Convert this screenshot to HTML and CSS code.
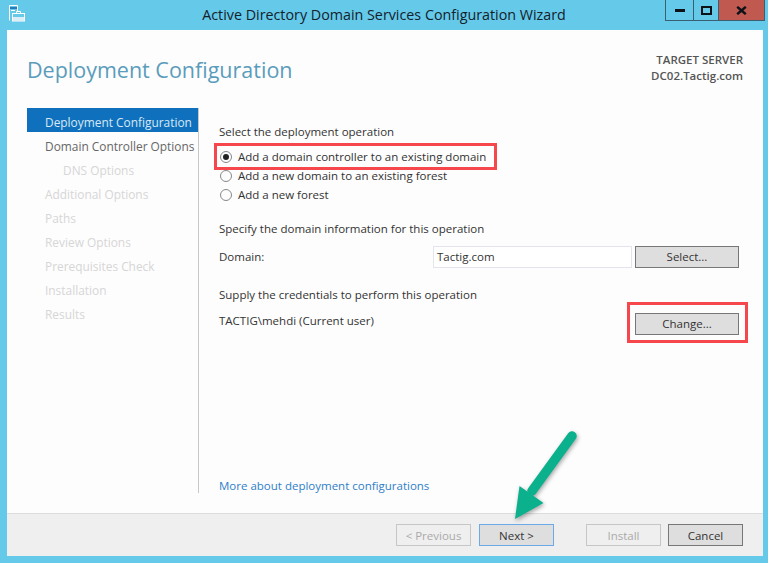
FILE: index.html
```html
<!DOCTYPE html>
<html lang="en">
<head>
<meta charset="utf-8">
<title>Active Directory Domain Services Configuration Wizard</title>
<link rel="stylesheet" href="styles.css">
</head>
<body>
<div class="window">
  <header class="titlebar">
    <svg class="app-icon" width="17" height="17" viewBox="0 0 17 17" fill="none" stroke="#fff" stroke-width="1">
      <path d="M.5 15.500V.5h8v5.500"/>
      <path d="M1 3h7" stroke="#2a79b8" stroke-width="2"/>
      <path d="M2 5.500h4"/>
      <rect x="3.500" y="8.500" width="12" height="7.500" fill="#65c9ea"/>
      <path d="M7.500 8.500V6.500h4v2"/>
      <rect x="4" y="12" width="11" height="4" fill="#dceff7" stroke="none"/>
    </svg>
    <div class="title">Active Directory Domain Services Configuration Wizard</div>
    <div class="controls">
      <div class="ctl ctl-min"><svg width="10" height="4" viewBox="0 0 10 4"><rect width="10" height="3" y="1" fill="#0c1217"/></svg></div>
      <div class="ctl ctl-max"><svg width="11" height="9" viewBox="0 0 11 9" fill="none"><rect x="1" y="1" width="9" height="7" stroke="#0c1217" stroke-width="2"/></svg></div>
      <div class="ctl ctl-close"><svg width="11" height="9" viewBox="0 0 11 9" fill="none"><path d="M1.200.8 9.800 8.200M9.800.8 1.200 8.200" stroke="#0c1217" stroke-width="2.400"/></svg></div>
    </div>
  </header>

  <div class="panel">
    <div class="head">
      <h1 class="heading">Deployment Configuration</h1>
      <div class="target">
        <div>TARGET SERVER</div>
        <div>DC02.Tactig.com</div>
      </div>
    </div>

    <div class="content">
      <nav class="steps">
        <div class="step step-active">Deployment Configuration</div>
        <div class="step step-on">Domain Controller Options</div>
        <div class="step step-off step-sub">DNS Options</div>
        <div class="step step-off">Additional Options</div>
        <div class="step step-off">Paths</div>
        <div class="step step-off">Review Options</div>
        <div class="step step-off">Prerequisites Check</div>
        <div class="step step-off">Installation</div>
        <div class="step step-off">Results</div>
      </nav>

      <main class="form">
        <div class="label label-first">Select the deployment operation</div>
        <div class="radios">
          <div class="radio-row"><span class="radio radio-on"></span>Add a domain controller to an existing domain</div>
          <div class="radio-row"><span class="radio"></span>Add a new domain to an existing forest</div>
          <div class="radio-row"><span class="radio"></span>Add a new forest</div>
        </div>
        <div class="label label-specify">Specify the domain information for this operation</div>
        <div class="domain-row">
          <div class="domain-label">Domain:</div>
          <div class="input">Tactig.com</div>
          <div class="btn btn-form">Select...</div>
        </div>
        <div class="label label-supply">Supply the credentials to perform this operation</div>
        <div class="cred-row">
          <div class="cred-user">TACTIG\mehdi (Current user)</div>
          <div class="btn btn-form">Change...</div>
        </div>
        <a class="more" href="#">More about deployment configurations</a>
      </main>
    </div>

    <footer class="footer">
      <div class="btn btn-foot btn-disabled">&lt; Previous</div>
      <div class="btn btn-foot btn-next">Next &gt;</div>
      <div class="btn btn-foot btn-disabled btn-install">Install</div>
      <div class="btn btn-foot">Cancel</div>
    </footer>
  </div>
</div>

<div class="mark mark-radio"></div>
<div class="mark mark-change"></div>
<svg class="arrow" width="80" height="100" viewBox="0 0 80 100">
  <path d="M64 10 24 65" stroke="#0bb08c" stroke-width="9.500" stroke-linecap="round" fill="none"/>
  <path d="M7 93 11.500 60 35.500 77Z" fill="#0bb08c"/>
</svg>
</body>
</html>
```
FILE: styles.css
```css
* { box-sizing: border-box; }
html, body { margin: 0; padding: 0; }
body {
  width: 768px;
  height: 563px;
  overflow: hidden;
  position: relative;
  background: #65c9ea;
  font-family: "Open Sans", "Noto Sans", sans-serif;
  font-size: 11.500px;
  color: #333;
}
.window { display: flex; flex-direction: column; height: 100%; }

.titlebar { height: 30px; position: relative; display: flex; justify-content: center; flex: none; }
.app-icon { position: absolute; left: 9px; top: 5px; }
.title { font-size: 14.300px; line-height: 30px; color: #14222b; }
.controls { position: absolute; right: 3px; top: 0; display: flex; height: 21px; border: 1px solid #3a5f72; border-top: 0; }
.ctl { display: flex; align-items: center; justify-content: center; }
.ctl-min { width: 28px; border-right: 1px solid #3a5f72; }
.ctl-max { width: 25px; border-right: 1px solid #3a5f72; }
.ctl-close { width: 45px; background: #c05a50; }

.panel { flex: 1; margin: 0 5px 7px 7px; background: #fdfdfd; display: flex; flex-direction: column; min-height: 0; }

.head { height: 78px; flex: none; display: flex; justify-content: space-between; padding: 0 20px; }
.heading { margin: 22px 0 0; font-size: 21.500px; font-weight: 400; line-height: 36px; color: #5a9cbb; }
.target { margin-top: 22px; text-align: right; font-weight: 600; line-height: 16px; color: #555; }

.content { flex: 1; display: flex; min-height: 0; padding-bottom: 20px; }

.steps { width: 172px; margin-left: 20px; flex: none; border-right: 1px solid #c8c8c8; }
.step { height: 24px; line-height: 29px; padding-left: 18px; font-size: 11.900px; white-space: nowrap; }
.step-active { background: #0f71bd; color: #d8e8f4; }
.step-on { color: #666; }
.step-off { color: #d6d6d6; }
.step-sub { padding-left: 36px; }

.form { flex: 1; display: flex; flex-direction: column; padding: 0 24px 0 20px; min-width: 0; color: #333; }
.label { line-height: 16px; }
.label-first { margin-top: 16px; }
.radios { margin-top: 7px; }
.radio-row { height: 19px; display: flex; align-items: center; gap: 6px; white-space: nowrap; }
.radio { width: 12px; height: 12px; border-radius: 50%; border: 1px solid #888; background: #fdfdfd; margin-left: 1px; display: flex; align-items: center; justify-content: center; flex: none; }
.radio-on::after { content: ""; width: 6px; height: 6px; border-radius: 50%; background: #222; }
.label-specify { margin-top: 17px; }
.domain-row { display: flex; align-items: center; height: 23px; margin-top: 8px; }
.domain-label { width: 214px; flex: none; }
.input { width: 199px; height: 22px; line-height: 20px; padding-left: 3px; border: 1px solid #e4e4ee; background: #fff; }
.btn { height: 22px; display: flex; align-items: center; justify-content: center; border: 1px solid #777; background: #dedede; color: #333; }
.btn-form { width: 104px; margin-left: 3px; }
.label-supply { margin-top: 19px; }
.cred-row { display: flex; align-items: center; justify-content: space-between; margin-top: 9px; height: 23px; }
.cred-user { margin-bottom: 6px; }
.more { margin-top: auto; margin-bottom: -1px; line-height: 16px; color: #2f7fc8; text-decoration: none; }

.footer { height: 43px; flex: none; display: flex; align-items: center; background: #efefef; border-top: 1px solid #dcdcdc; padding: 0 20px 0 389px; }
.btn-foot { width: 75px; }
.btn-next { margin-left: 8px; border-color: #6ca9e8; }
.btn-disabled { background: #efefef; border-color: #c6c6c6; color: #aaa; }
.btn-install { margin: 0 7px 0 32px; }

.mark { position: absolute; border: 3px solid #f5474c; }
.mark-radio { left: 214px; top: 143px; width: 283px; height: 27px; }
.mark-change { left: 627px; top: 302px; width: 121px; height: 41px; }
.arrow { position: absolute; left: 508px; top: 426px; filter: drop-shadow(1px 2px 2px rgba(0,0,0,.35)); }
```
